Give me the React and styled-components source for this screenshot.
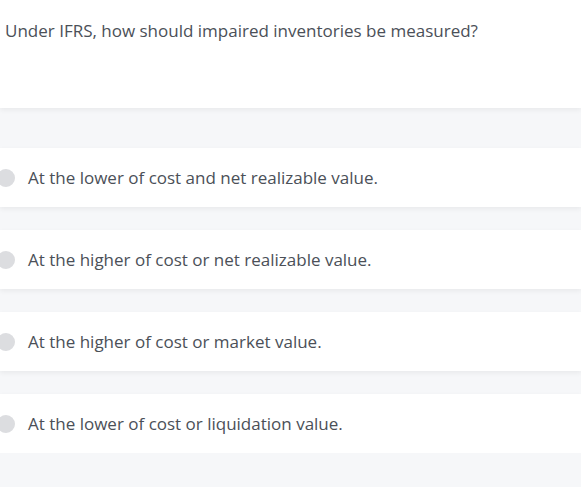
import React from 'react';
import styled, { createGlobalStyle } from 'styled-components';

const GlobalStyle = createGlobalStyle`
	html, body {
		margin: 0;
		padding: 0;
		background-color: #f6f7f9;
		font-family: 'Open Sans', 'Noto Sans', sans-serif;
	}
`;

const Wrapper = styled.div`
	width: 100%;
	display: flex;
	flex-direction: column;
	overflow: hidden;
`;

const QuestionCard = styled.div`
	background-color: #ffffff;
	height: 108px;
	box-sizing: border-box;
	padding: 19px 5px 0;
	box-shadow: 0 2px 5px rgba(0, 0, 0, 0.06);
`;

const QuestionText = styled.p`
	margin: 0;
	font-size: 17px;
	line-height: 24px;
	color: #4b5058;
`;

const OptionList = styled.div`
	display: flex;
	flex-direction: column;
	gap: 23px;
	margin-top: 40px;
`;

const OptionCard = styled.label`
	display: flex;
	align-items: center;
	gap: 13px;
	height: 59px;
	background-color: #ffffff;
	box-shadow: 0 2px 5px rgba(0, 0, 0, 0.06);
	cursor: pointer;
`;

const Radio = styled.span`
	flex: none;
	width: 18px;
	height: 18px;
	margin-left: -3px;
	border-radius: 50%;
	background-color: #dcdde0;
`;

const OptionText = styled.span`
	font-size: 17px;
	color: #4b5058;
`;

const options = [
	'At the lower of cost and net realizable value.',
	'At the higher of cost or net realizable value.',
	'At the higher of cost or market value.',
	'At the lower of cost or liquidation value.',
];

const App = () => {
	return (
		<Wrapper>
			<GlobalStyle />
			<QuestionCard>
				<QuestionText>Under IFRS, how should impaired inventories be measured?</QuestionText>
			</QuestionCard>
			<OptionList>
				{options.map((text) => (
					<OptionCard key={text}>
						<Radio />
						<OptionText>{text}</OptionText>
					</OptionCard>
				))}
			</OptionList>
		</Wrapper>
	);
};

export default App;
